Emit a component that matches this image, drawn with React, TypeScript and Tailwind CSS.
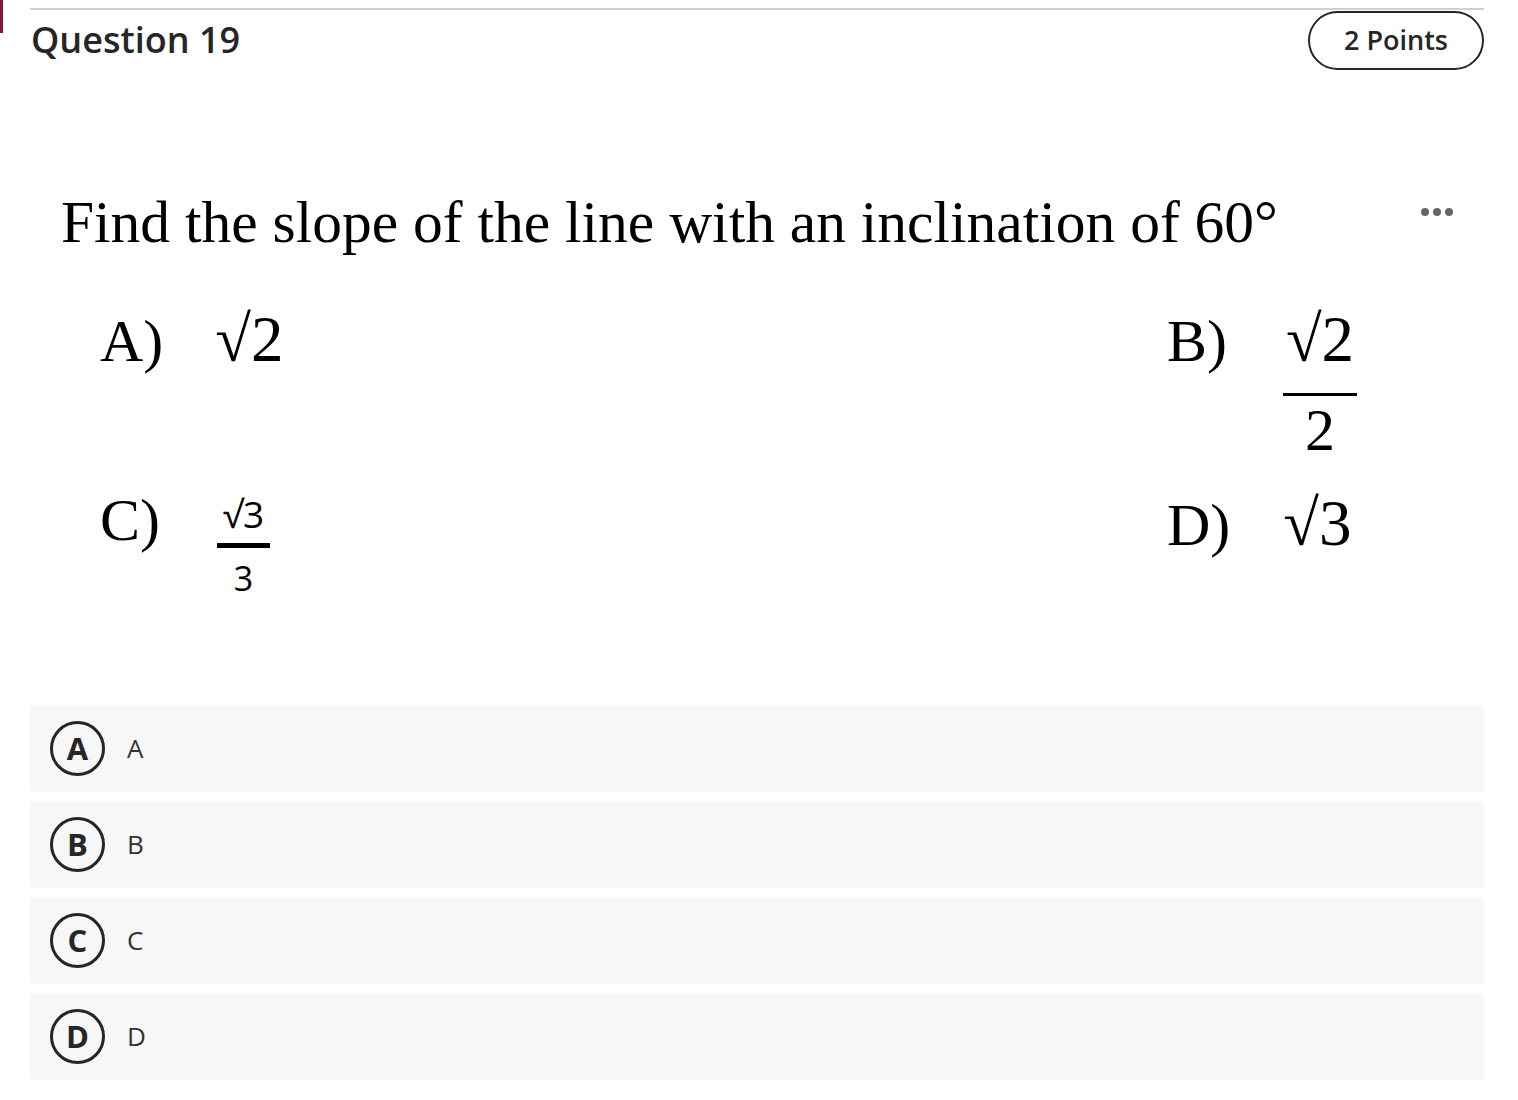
const choices = ["A", "B", "C", "D"]

export default function App() {
  return (
    <div className="relative min-h-[1100px] bg-white font-['Open_Sans',sans-serif] text-[#262626]">
      {/* accent bar */}
      <div className="absolute left-0 top-0 h-[33px] w-[3px] bg-[#8a1538]" />

      <div className="pl-[30px] pr-[34px] pt-[8px]">
        <div className="border-t-2 border-[#d0d0d0]" />

        {/* Header */}
        <div className="flex items-start justify-between">
          <h2 className="pl-[1px] pt-[10px] text-[36px] font-semibold leading-[40px]">Question 19</h2>
          <div className="mt-[1px] flex h-[59px] w-[176px] items-center justify-center rounded-full border-2 border-[#262626] text-[27px] font-semibold">
            2 Points
          </div>
        </div>

        {/* Question image */}
        <div className="mt-[121px] font-['Liberation_Serif',serif] text-black">
          <div className="flex items-start justify-between pl-[31px] pr-[31px]">
            <p className="text-[59.5px] leading-[62px]">Find the slope of the line with an inclination of 60°</p>
            <div className="mt-[17px] flex gap-[4px]">
              <span className="h-[8px] w-[8px] rounded-full bg-[#666]" />
              <span className="h-[8px] w-[8px] rounded-full bg-[#666]" />
              <span className="h-[8px] w-[8px] rounded-full bg-[#666]" />
            </div>
          </div>

          <div className="mt-[53px] grid grid-cols-[1067px_1fr] gap-y-[30px] pl-[70px]">
            {/* A */}
            <div className="flex items-baseline gap-[52px]">
              <span className="text-[60px] leading-[60px]">A)</span>
              <span className="text-[65px] leading-[66px]">√2</span>
            </div>
            {/* B */}
            <div className="flex items-baseline gap-[56px]">
              <span className="text-[60px] leading-[60px]">B)</span>
              <div className="inline-flex flex-col items-center">
                <span className="text-[65px] leading-[66px]">√2</span>
                <span className="mt-[21px] block h-[3px] w-[74px] bg-black" />
                <span className="mt-[4px] text-[60px] leading-[60px]">2</span>
              </div>
            </div>

            {/* C */}
            <div className="flex items-baseline gap-[57px]">
              <span className="text-[60px] leading-[60px]">C)</span>
              <div className="mt-[4px] flex flex-col items-center self-start font-['Open_Sans',sans-serif] text-[34px] leading-[40px]">
                <span className="text-[37px] font-medium">√3</span>
                <span className="mt-[9px] block h-[5px] w-[53px] bg-black" />
                <span className="mt-[10px]">3</span>
              </div>
            </div>
            {/* D */}
            <div className="flex items-baseline gap-[53px]">
              <span className="text-[60px] leading-[60px]">D)</span>
              <span className="text-[65px] leading-[66px]">√3</span>
            </div>
          </div>
        </div>

        {/* Answer choices */}
        <div className="mt-[107px] flex flex-col gap-[9px]">
          {choices.map((c) => (
            <div key={c} className="flex h-[87px] items-center gap-[22px] rounded-[3px] bg-[#f7f7f7] pl-[20px]">
              <span className="flex h-[55px] w-[55px] items-center justify-center rounded-full border-[3px] border-[#262626] text-[31px] font-bold">
                {c}
              </span>
              <span className="text-[26px] text-[#333]">{c}</span>
            </div>
          ))}
        </div>
      </div>
    </div>
  )
}
